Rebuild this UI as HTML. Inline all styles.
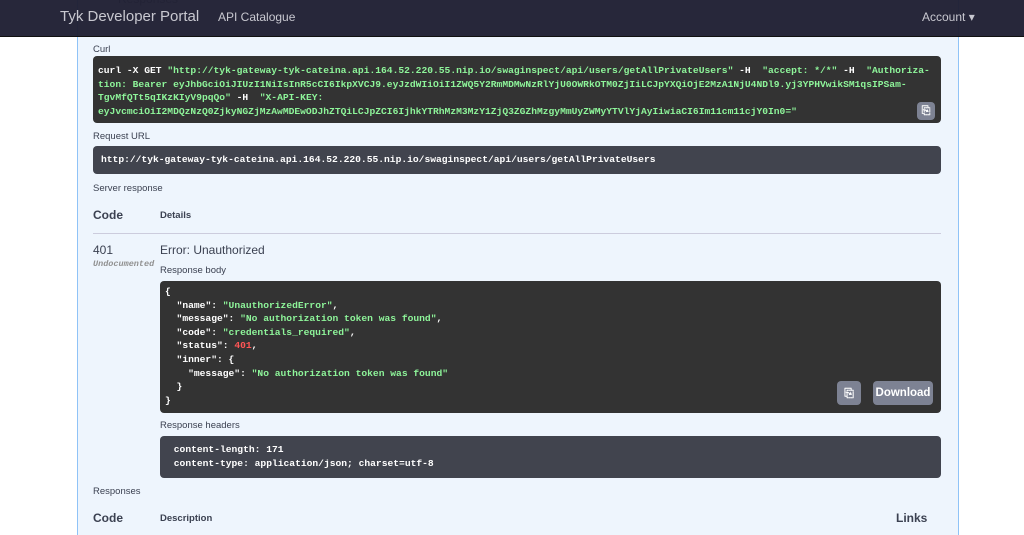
<!DOCTYPE html>
<html><head><meta charset="utf-8"><style>
*{margin:0;padding:0;box-sizing:border-box}
body{width:1024px;height:535px;overflow:hidden;background:#fff;font-family:"Liberation Sans",sans-serif;position:relative;color:#3b4151}
.panel{position:absolute;left:77px;top:0;width:882px;height:535px;background:#eef5fd;border-left:1px solid #8fc3f7;border-right:1px solid #8fc3f7}
.nav{position:absolute;left:0;top:0;width:1024px;height:37px;background:rgba(30,30,50,.96);border-bottom:1px solid #111}
.nav span{position:absolute;color:#c8c8d0}
.a{position:absolute;white-space:pre}
.lbl{font-size:9.5px;color:#3b4151}
.box{position:absolute;border-radius:4px;font-family:"Liberation Mono",monospace;font-size:9.65px;font-weight:bold;line-height:13.6px;white-space:pre;padding:8px 7px;color:#fff}
.g{color:#8ef59a}
.r{color:#f55}
.btn{position:absolute;background:#7d8293;border-radius:4px;color:#fff;font-weight:bold;font-size:12px;text-align:center;line-height:24px}
</style></head><body>
<div class="panel"></div>
<div class="a" style="left:118px;top:-8px;font-size:12px;color:#888">Responses</div>
<div class="nav">
<span style="left:60px;top:8px;font-size:15px">Tyk Developer Portal</span>
<span style="left:218px;top:10px;font-size:12px">API Catalogue</span>
<span style="left:922px;top:10px;font-size:12px">Account ▾</span>
</div>
<div class="a lbl" style="left:93px;top:44px">Curl</div>
<div class="box" style="left:93px;top:56px;width:848px;height:67px;background:#333;padding:8px 5px 0"><span>curl -X GET </span><span class="g">"http://tyk-gateway-tyk-cateina.api.164.52.220.55.nip.io/swaginspect/api/users/getAllPrivateUsers"</span> -H  <span class="g">"accept: */*"</span> -H  <span class="g">"Authoriza-
tion: Bearer eyJhbGciOiJIUzI1NiIsInR5cCI6IkpXVCJ9.eyJzdWIiOiI1ZWQ5Y2RmMDMwNzRlYjU0OWRkOTM0ZjIiLCJpYXQiOjE2MzA1NjU4NDl9.yj3YPHVwikSM1qsIPSam-
TgvMfQTt5qIKzKIyV9pqQo"</span> -H  <span class="g">"X-API-KEY:
eyJvcmciOiI2MDQzNzQ0ZjkyNGZjMzAwMDEwODJhZTQiLCJpZCI6IjhkYTRhMzM3MzY1ZjQ3ZGZhMzgyMmUyZWMyYTVlYjAyIiwiaCI6Im11cm11cjY0In0="</span></div>
<div class="btn" style="left:917px;top:102px;width:18px;height:18px;line-height:18px;font-size:11px">⎘</div>
<div class="a lbl" style="left:93px;top:131px">Request URL</div>
<div class="box" style="left:93px;top:146px;width:848px;height:28px;background:#41444e;padding:7px 8px">http://tyk-gateway-tyk-cateina.api.164.52.220.55.nip.io/swaginspect/api/users/getAllPrivateUsers</div>
<div class="a lbl" style="left:93px;top:183px">Server response</div>
<div class="a" style="left:93px;top:208px;font-size:12px;font-weight:bold">Code</div>
<div class="a" style="left:160px;top:210px;font-size:9.5px;font-weight:bold">Details</div>
<div style="position:absolute;left:93px;top:233px;width:848px;height:1px;background:#ccd"></div>
<div class="a" style="left:93px;top:243px;font-size:12px">401</div>
<div class="a" style="left:93px;top:259px;font-size:8.5px;font-family:'Liberation Mono',monospace;font-style:italic;font-weight:bold;color:#909090">Undocumented</div>
<div class="a" style="left:160px;top:243px;font-size:12px">Error: Unauthorized</div>
<div class="a lbl" style="left:160px;top:265px">Response body</div>
<div class="box" style="left:160px;top:281px;width:781px;height:132px;background:#333;padding:4px 5px">{
  <span>"name"</span>: <span class="g">"UnauthorizedError"</span>,
  "message": <span class="g">"No authorization token was found"</span>,
  "code": <span class="g">"credentials_required"</span>,
  "status": <span class="r">401</span>,
  "inner": {
    "message": <span class="g">"No authorization token was found"</span>
  }
}</div>
<div class="btn" style="left:837px;top:381px;width:24px;height:24px">⎘</div>
<div class="btn" style="left:873px;top:381px;width:60px;height:24px;font-size:11.5px">Download</div>
<div class="a lbl" style="left:160px;top:420px">Response headers</div>
<div class="box" style="left:160px;top:436px;width:781px;height:42px;background:#41444e;padding:7px 8px"> content-length: 171
 content-type: application/json; charset=utf-8</div>
<div class="a lbl" style="left:93px;top:486px">Responses</div>
<div class="a" style="left:93px;top:511px;font-size:12px;font-weight:bold">Code</div>
<div class="a" style="left:160px;top:513px;font-size:9.5px;font-weight:bold">Description</div>
<div class="a" style="left:896px;top:511px;font-size:12px;font-weight:bold">Links</div>
</body></html>
